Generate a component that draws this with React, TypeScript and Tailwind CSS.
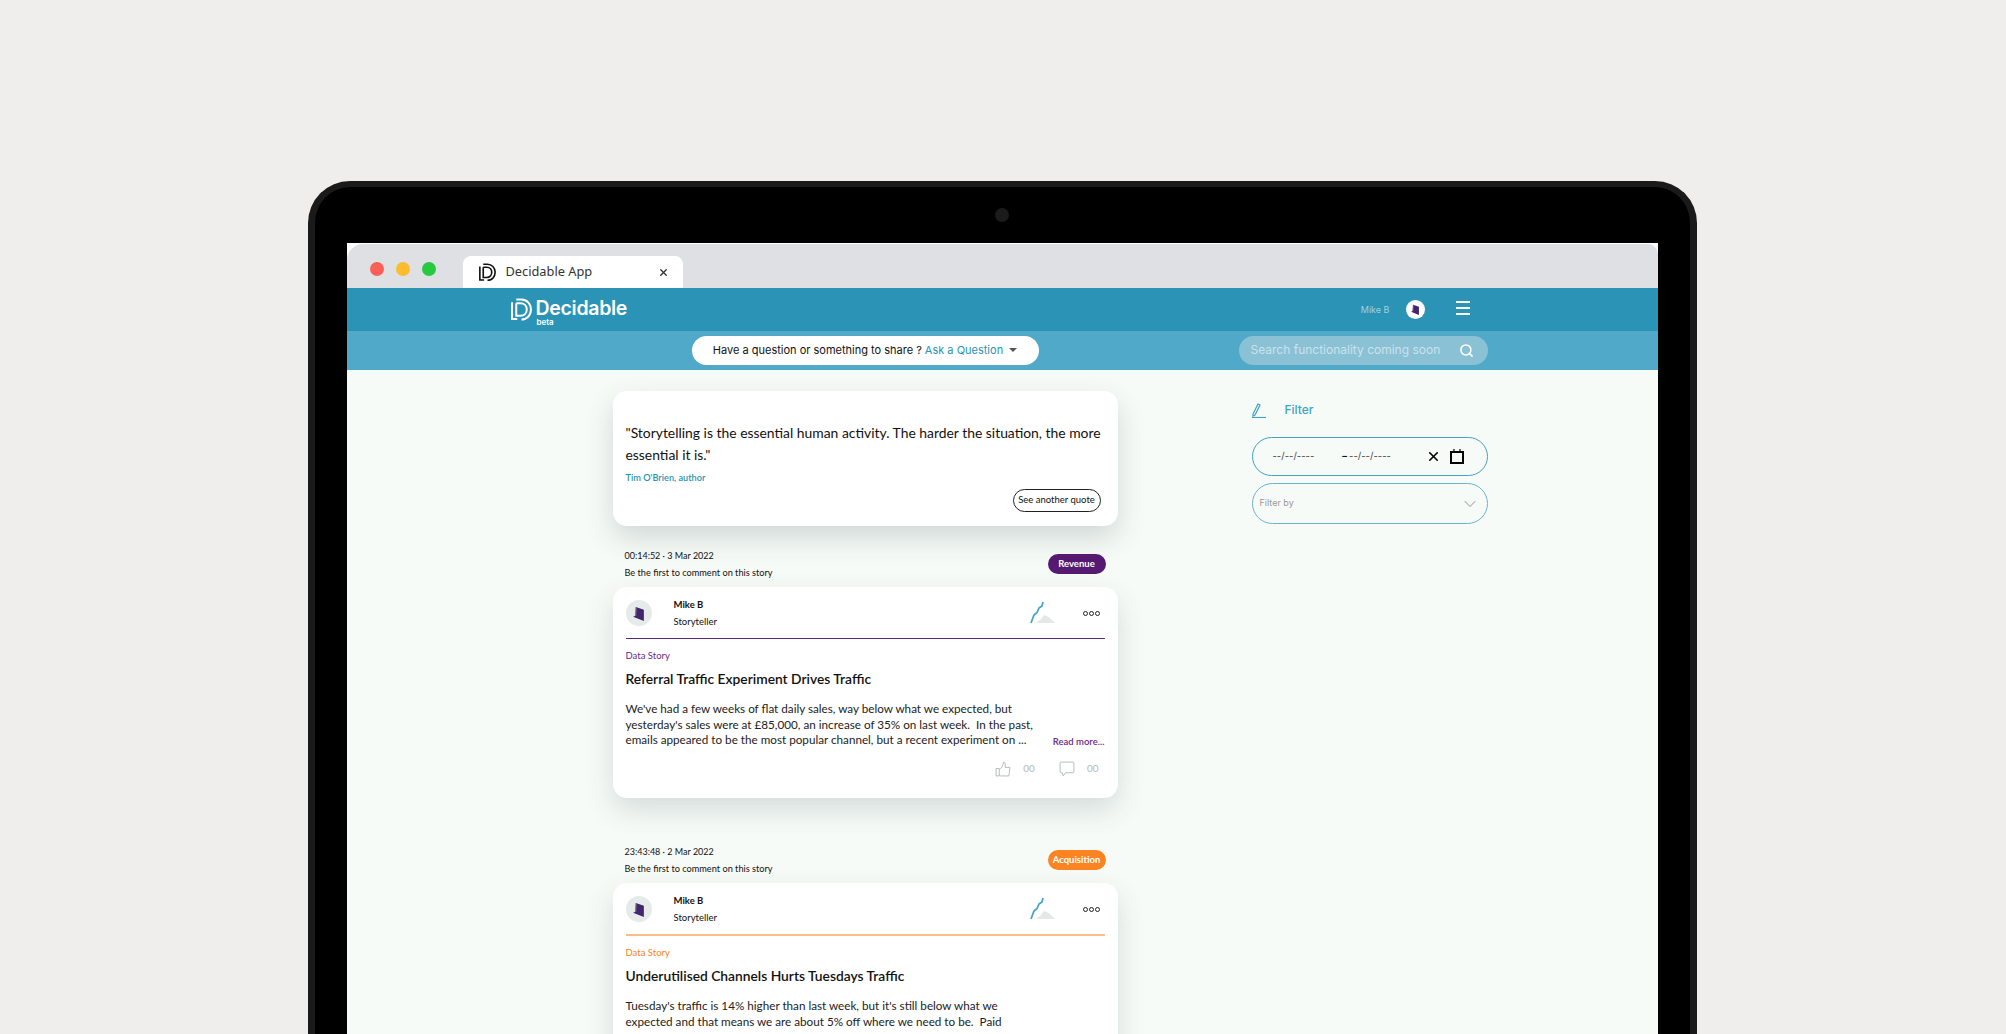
import { Search, X, ChevronDown } from 'lucide-react'

const corps = { fontFamily: 'Lato, "Liberation Sans", sans-serif' }
const interface_ = { fontFamily: 'Inter, "Liberation Sans", sans-serif' }

function LogoD({ couleur, taille }: { couleur: string; taille: number }) {
  return (
    <svg width={taille} height={taille * 1.1} viewBox="0 0 20 22" fill="none" stroke={couleur} strokeWidth="1.900">
      <path d="M1 4v16h5" />
      <path d="M5 5v12h4c4 0 6-3 6-6s-2-6-6-6H5" />
      <path d="M5 1.500h5c5 0 9 4 9 9.500s-4 9.500-9 9.500" />
    </svg>
  )
}

function Boite({ className }: { className?: string }) {
  return (
    <svg viewBox="0 0 10 14" className={className}>
      <path d="M2.500 1 L10 3.500 V14 L0 10 L2 9 Z" fill="#43256b" />
      <path d="M2 9 L2.500 1 L3.300 1.300 L3 9.300 Z" fill="#7b6a96" />
    </svg>
  )
}

function IconeCourbe() {
  return (
    <svg width="26" height="24" viewBox="0 0 26 24" fill="none">
      <path d="M6 22 Q11 19 14 14 L19 16 L25 22 Z" fill="#e3e8e6" />
      <path d="M1 22 L4 14 L7 11.500 L9 7 L12 5 L13 1" stroke="#43a6c6" strokeWidth="1.800" />
    </svg>
  )
}

function Plus() {
  return (
    <div className="flex gap-[1px]">
      <span className="w-[5px] h-[5px] rounded-full border border-[#222]" />
      <span className="w-[5px] h-[5px] rounded-full border border-[#222]" />
      <span className="w-[5px] h-[5px] rounded-full border border-[#222]" />
    </div>
  )
}

type Histoire = {
  date: string
  categorie: string
  titre: string
  lignes: string[]
  pill: string
  texte: string
  trait: string
  suite?: boolean
}

const histoires: Histoire[] = [
  {
    date: '00:14:52 · 3 Mar 2022',
    categorie: 'Revenue',
    titre: 'Referral Traffic Experiment Drives Traffic',
    lignes: [
      "We've had a few weeks of flat daily sales, way below what we expected, but",
      "yesterday's sales were at £85,000, an increase of 35% on last week.  In the past,",
      'emails appeared to be the most popular channel, but a recent experiment on ...',
    ],
    pill: 'bg-[#571a72]',
    texte: 'text-[#6a2a88]',
    trait: 'bg-[#5a2a80] h-[1px] mb-[1px]',
    suite: true,
  },
  {
    date: '23:43:48 · 2 Mar 2022',
    categorie: 'Acquisition',
    titre: 'Underutilised Channels Hurts Tuesdays Traffic',
    lignes: [
      "Tuesday's traffic is 14% higher than last week, but it's still below what we",
      'expected and that means we are about 5% off where we need to be.  Paid',
    ],
    pill: 'bg-[#fb8322]',
    texte: 'text-[#fb8322]',
    trait: 'bg-[#fdbd8b] h-[2px]',
  },
]

function CarteHistoire({ h }: { h: Histoire }) {
  return (
    <div>
      <div className="flex items-center justify-between pl-[12px] pr-[12px] h-[32px] text-[#111]">
        <div>
          <p className="text-[9px] leading-[17px]">{h.date}</p>
          <p className="text-[9.200px] leading-[17px]">Be the first to comment on this story</p>
        </div>
        <span className={`${h.pill} text-white text-[9.500px] font-bold w-[58px] h-[20px] rounded-full flex items-center justify-center`}>
          {h.categorie}
        </span>
      </div>
      <div className="bg-white rounded-[14px] shadow-[0_12px_28px_rgba(40,60,60,0.16)] px-[13px] h-[211px] mt-[7px]">
        <div className="flex items-center h-[51px] pt-[1px]">
          <div className="w-[26px] h-[26px] rounded-full bg-[#e5ebe9] flex items-center justify-center">
            <Boite className="w-[11px] h-[15px]" />
          </div>
          <div className="ml-[22px] text-[#111]">
            <p className="text-[9.500px] font-bold leading-[17px]">Mike B</p>
            <p className="text-[9.500px] leading-[17px]">Storyteller</p>
          </div>
          <div className="ml-auto mr-[27px]">
            <IconeCourbe />
          </div>
          <div className="mr-[5px]">
            <Plus />
          </div>
        </div>
        <div className={h.trait} />
        <p className={`${h.texte} text-[9.500px] leading-[12px] mt-[11px]`}>Data Story</p>
        <h3 className="text-[13.800px] font-semibold text-[#111] leading-[18px] mt-[8px]">{h.titre}</h3>
        <div className="flex items-end justify-between mt-[13px]">
          <div className="text-[11.700px] leading-[15.600px] text-[#222] whitespace-pre">
            {h.lignes.map((l) => (
              <p key={l}>{l}</p>
            ))}
          </div>
          {h.suite && (
            <span className="text-[#6a2a88] text-[9.500px] leading-[12px] font-semibold whitespace-nowrap">Read more...</span>
          )}
        </div>
        {h.suite && (
          <div className="flex items-center justify-end gap-[12px] mt-[13px] pr-[6px] text-[10px] text-[#b5b9b9]">
            <svg width="16" height="16" viewBox="0 0 15 15" fill="none" stroke="#b5b9b9" strokeWidth="0.900">
              <path d="M1 7h3v7H1zM4 8c2-1 3.500-3 4-7 1.500 0 2 1.500 1.500 5H14l-1 8H6c-1 0-2-.5-2-1" />
            </svg>
            <span>00</span>
            <svg className="ml-[12px]" width="16" height="16" viewBox="0 0 15 15" fill="none" stroke="#b5b9b9" strokeWidth="0.900">
              <path d="M2 1h11a1 1 0 0 1 1 1v8a1 1 0 0 1-1 1H6l-2 3-1-3H2a1 1 0 0 1-1-1V2a1 1 0 0 1 1-1z" />
            </svg>
            <span>00</span>
          </div>
        )}
      </div>
    </div>
  )
}

export default function App() {
  return (
    <div className="h-[1034px] overflow-hidden bg-[#efeeec] pt-[181px] pr-[2px] flex justify-center" style={corps}>
      <div className="w-[1389px] h-[900px] bg-black rounded-t-[42px] border-t-[6px] border-x-[7px] border-[#1a1a1a]">
        <div className="h-[56px] flex items-center justify-center">
          <span className="w-[14px] h-[14px] rounded-full bg-[#1b1b1b] mt-[-1px]" />
        </div>
        <div className="mx-[32px] bg-white pt-[1px] h-[800px]">
          {/* barre du navigateur */}
          <div className="bg-[#dee0e4] h-[44px] rounded-tl-[16px] rounded-tr-[10px] flex items-end">
            <div className="flex gap-[12px] ml-[23px] mb-[12px]">
              <span className="w-[14px] h-[14px] rounded-full bg-[#fc5f57]" />
              <span className="w-[14px] h-[14px] rounded-full bg-[#fdbb2e]" />
              <span className="w-[14px] h-[14px] rounded-full bg-[#27c940]" />
            </div>
            <div className="ml-[27px] w-[220px] h-[32px] bg-white rounded-t-[8px] flex items-center pl-[16px] pr-[14px]">
              <LogoD couleur="#111" taille={17} />
              <span className="ml-[10px] text-[12.800px] text-[#333]" style={{ fontFamily: '"Noto Sans", sans-serif' }}>
                Decidable App
              </span>
              <X className="ml-auto w-[11px] h-[11px] text-[#333]" strokeWidth={3} />
            </div>
          </div>

          {/* en-tête */}
          <div className="bg-[#2b93b5] h-[43px] flex items-center pl-[164px] pr-[188px]">
            <LogoD couleur="#fff" taille={21} />
            <div className="ml-[4px] mb-[2px] text-white leading-none relative" style={interface_}>
              <span className="text-[19.500px] font-semibold tracking-[-0.3px]">Decidable</span>
              <span className="absolute left-[1px] top-[19px] text-[8px] font-semibold">beta</span>
            </div>
            <span className="ml-auto text-[9px] text-[#9fd0e0]" style={interface_}>Mike B</span>
            <div className="ml-[16px] w-[19px] h-[19px] rounded-full bg-white flex items-center justify-center">
              <Boite className="w-[8px] h-[11px]" />
            </div>
            <div className="ml-[31px] mb-[3px] flex flex-col gap-[4.500px]">
              <span className="block w-[14px] h-[1.500px] bg-white" />
              <span className="block w-[14px] h-[1.500px] bg-white" />
              <span className="block w-[14px] h-[1.500px] bg-white" />
            </div>
          </div>

          {/* barre de recherche */}
          <div className="bg-[#50a9c8] h-[39px] flex items-center pl-[345px]">
            <div className="bg-white w-[347px] h-[29px] mb-[1px] rounded-full flex items-center justify-center text-[11px] text-[#111]" style={interface_}>
              <span>Have a question or something to share ?</span>
              <span className="ml-[3px] text-[#2b93b5]">Ask a Question</span>
              <span className="ml-[6px] w-0 h-0 border-x-[4px] border-x-transparent border-t-[4px] border-t-[#555]" />
            </div>
            <div className="ml-[200px] w-[249px] h-[29px] mb-[1px] rounded-full bg-[#8bc1d5] flex items-center pl-[12px] pr-[14px] text-[12px] text-[#c8e3ec]" style={interface_}>
              <span>Search functionality coming soon</span>
              <Search className="ml-auto w-[15px] h-[15px] text-white" strokeWidth={2.400} />
            </div>
          </div>

          {/* contenu */}
          <div className="bg-[#f7fbf8] h-[664px] overflow-hidden flex pl-[266px] pt-[21px]">
            <div className="w-[505px]">
              <div className="bg-white rounded-[14px] shadow-[0_12px_28px_rgba(40,60,60,0.18)] h-[135px] px-[13px] pt-[31px] relative">
                <p className="text-[13.900px] leading-[22px] text-[#111]">
                  "Storytelling is the essential human activity. The harder the situation, the more essential it is."
                </p>
                <p className="text-[9.200px] font-semibold text-[#2b93b5] mt-[5px]">Tim O'Brien, author</p>
                <button className="absolute right-[17px] bottom-[14px] w-[88px] h-[23px] rounded-full border border-[#222] text-[9.500px] text-[#111]">
                  See another quote
                </button>
              </div>
              <div className="mt-[22px]">
                <CarteHistoire h={histoires[0]} />
              </div>
              <div className="mt-[46px]">
                <CarteHistoire h={histoires[1]} />
              </div>
            </div>

            {/* filtres */}
            <div className="ml-[134px] w-[236px] pt-[11px]" style={interface_}>
              <div className="flex items-center h-[16px]">
                <svg width="14" height="16" viewBox="0 0 14 16" fill="none" stroke="#3fa3c6" strokeWidth="1.200">
                  <path d="M1 12 L6 2 L8 3 L3 13 L1 14 Z" />
                  <path d="M0 15.500 H14" />
                </svg>
                <span className="ml-[19px] text-[12px] font-medium text-[#3fa3c6]">Filter</span>
              </div>
              <div className="mt-[19px] h-[39px] rounded-full border border-[#4a9fc2] flex items-center pl-[20px] pr-[23px] text-[9.500px] text-[#444]">
                <span>--/--/----</span>
                <span className="ml-[28px] text-[#111] font-bold">–</span>
                <span className="ml-[2px]">--/--/----</span>
                <X className="ml-auto w-[15px] h-[15px] text-black" strokeWidth={2.500} />
                <svg className="ml-[9px]" width="14" height="15" viewBox="0 0 14 15" fill="none" stroke="#000" strokeWidth="2">
                  <path d="M1 3h12v11H1z" />
                  <path d="M4 0v3M10 0v3" strokeWidth="1.200" />
                </svg>
              </div>
              <div className="mt-[7px] h-[41px] rounded-full border border-[#6db2cf] flex items-center pl-[7px] pr-[7px] text-[9px] text-[#999]">
                <span className="mb-[2px]">Filter by</span>
                <ChevronDown className="ml-auto w-[20px] h-[20px] text-[#888]" strokeWidth={1.100} />
              </div>
            </div>
          </div>
        </div>
      </div>
    </div>
  )
}
